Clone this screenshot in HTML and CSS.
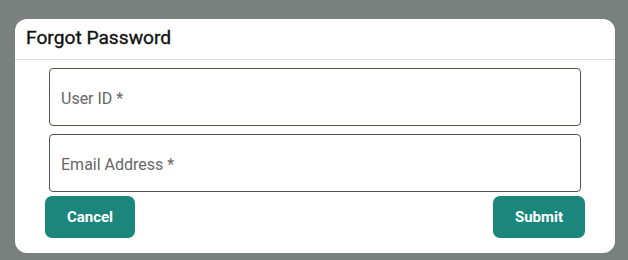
FILE: index.html
```html
<!DOCTYPE html>
<html>
<head>
<meta charset="utf-8">
<link rel="stylesheet" href="styles.css">
</head>
<body>
<div class="dialog">
  <div class="dialog-title">Forgot Password</div>
  <div class="dialog-body">
    <div class="field"><span class="label">User ID *</span></div>
    <div class="field"><span class="label">Email Address *</span></div>
  </div>
  <div class="actions">
    <button class="btn">Cancel</button>
    <button class="btn btn-submit">Submit</button>
  </div>
</div>
</body>
</html>
```
FILE: styles.css
```css
html, body {
  margin: 0;
  padding: 0;
}
body {
  width: 628px;
  height: 260px;
  background: #7a807e;
  font-family: Roboto, "Liberation Sans", sans-serif;
  padding: 19px 0 0 15px;
  box-sizing: border-box;
  overflow: hidden;
}
.dialog {
  width: 600px;
  height: 234px;
  background: #fff;
  border-radius: 12px;
  box-sizing: border-box;
  display: flex;
  flex-direction: column;
}
.dialog-title {
  height: 41px;
  box-sizing: border-box;
  border-bottom: 1px solid #dcdcdc;
  padding: 8px 0 0 11px;
  font-size: 19.2px;
  font-weight: 400;
  color: #111;
  line-height: 22px;
  -webkit-text-stroke: 0.35px #111;
}
.dialog-body {
  padding: 8px 34px 0 34px;
  display: flex;
  flex-direction: column;
  gap: 8px;
}
.field {
  height: 58px;
  box-sizing: border-box;
  border: 1px solid #57524d;
  border-radius: 4px;
  display: flex;
  align-items: center;
  padding: 3px 0 0 11px;
}
.label {
  font-size: 16px;
  color: #666;
}
.actions {
  display: flex;
  justify-content: space-between;
  padding: 4px 30px 0 30px;
}
.btn {
  width: 90px;
  height: 42px;
  border: none;
  border-radius: 7px;
  background: #1b877c;
  color: #fff;
  font-family: Roboto, "Liberation Sans", sans-serif;
  font-size: 15px;
  font-weight: 700;
  padding: 0;
}
.btn-submit {
  width: 92px;
}
```
